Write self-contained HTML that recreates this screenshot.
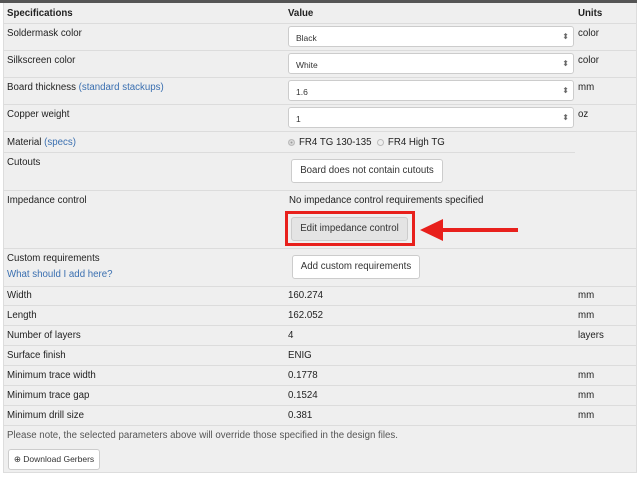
<!DOCTYPE html>
<html><head><meta charset="utf-8"><style>
*{margin:0;padding:0;box-sizing:border-box}
body{width:640px;height:477px;background:#fff;font-family:"Liberation Sans",Arial,sans-serif;font-size:9.7px;color:#222;position:relative;overflow:hidden}
#wrap{position:absolute;left:3px;top:0;width:634px;height:473px;background:#efefef;border-left:1px solid #ddd;border-right:1px solid #ddd;border-bottom:1px solid #ddd}
#top{position:absolute;left:0;top:0;width:637px;height:3px;background:#555}
.t{position:absolute;white-space:nowrap;line-height:11px}
.b{font-weight:bold}
.a{color:#3a6fb0}
.hl{position:absolute;height:1px;background:#dcdcdc;left:3px;width:633px}
.sel{position:absolute;left:288px;width:286px;height:21px;background:#fff;border:1px solid #ccc;border-radius:3px;font-size:8.5px;padding:6px 0 0 7px;color:#333}
.sel:after{content:"⬍";position:absolute;right:4px;top:5px;font-size:8px;color:#666}
.btn{position:absolute;background:#fff;border:1px solid #ccc;border-radius:3px;text-align:center;font-size:9.7px;color:#333}
.rad{display:inline-block;width:7px;height:7px;border-radius:50%;border:1px solid #bbb;background:#eee;vertical-align:-1px;margin-right:4px}
.rad.on{background:#999;box-shadow:inset 0 0 0 1.5px #ddd}
</style></head><body>
<div id="wrap"></div><div id="top"></div>
<div class="t b" style="left:7px;top:8px">Specifications</div>
<div class="t b" style="left:288px;top:8px">Value</div>
<div class="t b" style="left:578px;top:8px">Units</div>
<div class="hl" style="top:23px"></div>
<div class="t" style="left:7px;top:28px">Soldermask color</div>
<div class="sel" style="top:26px">Black</div>
<div class="t" style="left:578px;top:28px">color</div>
<div class="hl" style="top:50px"></div>
<div class="t" style="left:7px;top:55px">Silkscreen color</div>
<div class="sel" style="top:53px">White</div>
<div class="t" style="left:578px;top:55px">color</div>
<div class="hl" style="top:77px"></div>
<div class="t" style="left:7px;top:82px">Board thickness <span class="a">(standard stackups)</span></div>
<div class="sel" style="top:80px">1.6</div>
<div class="t" style="left:578px;top:82px">mm</div>
<div class="hl" style="top:104px"></div>
<div class="t" style="left:7px;top:109px">Copper weight</div>
<div class="sel" style="top:107px">1</div>
<div class="t" style="left:578px;top:109px">oz</div>
<div class="hl" style="top:131px"></div>
<div class="t" style="left:7px;top:137px">Material <span class="a">(specs)</span></div>
<div class="t" style="left:288px;top:137px"><span class="rad on"></span>FR4 TG 130-135 &nbsp;<span class="rad"></span>FR4 High TG</div>
<div class="hl" style="top:152px;width:572px"></div>
<div class="t" style="left:7px;top:157px">Cutouts</div>
<div class="btn" style="left:291px;top:159px;width:152px;height:24px;line-height:22px">Board does not contain cutouts</div>
<div class="hl" style="top:190px"></div>
<div class="t" style="left:7px;top:195px">Impedance control</div>
<div class="t" style="left:289px;top:195px">No impedance control requirements specified</div>
<div style="position:absolute;left:285px;top:211px;width:130px;height:35px;border:3px solid #e8201c"></div>
<div class="btn" style="left:291px;top:217px;width:117px;height:24px;line-height:22px;background:#e4e4e4">Edit impedance control</div>
<svg style="position:absolute;left:415px;top:215px" width="110" height="30"><polygon points="5,15 28,4 28,26" fill="#e8201c"/><rect x="26" y="13" width="77" height="4" fill="#e8201c"/></svg>
<div class="hl" style="top:248px"></div>
<div class="t" style="left:7px;top:253px">Custom requirements</div>
<div class="t a" style="left:7px;top:269px">What should I add here?</div>
<div class="btn" style="left:292px;top:255px;width:128px;height:24px;line-height:22px">Add custom requirements</div>
<div class="hl" style="top:286px"></div>
<div class="t" style="left:7px;top:290px">Width</div><div class="t" style="left:288px;top:290px">160.274</div><div class="t" style="left:578px;top:290px">mm</div>
<div class="hl" style="top:305px"></div>
<div class="t" style="left:7px;top:310px">Length</div><div class="t" style="left:288px;top:310px">162.052</div><div class="t" style="left:578px;top:310px">mm</div>
<div class="hl" style="top:325px"></div>
<div class="t" style="left:7px;top:330px">Number of layers</div><div class="t" style="left:288px;top:330px">4</div><div class="t" style="left:578px;top:330px">layers</div>
<div class="hl" style="top:345px"></div>
<div class="t" style="left:7px;top:350px">Surface finish</div><div class="t" style="left:288px;top:350px">ENIG</div>
<div class="hl" style="top:365px"></div>
<div class="t" style="left:7px;top:370px">Minimum trace width</div><div class="t" style="left:288px;top:370px">0.1778</div><div class="t" style="left:578px;top:370px">mm</div>
<div class="hl" style="top:385px"></div>
<div class="t" style="left:7px;top:390px">Minimum trace gap</div><div class="t" style="left:288px;top:390px">0.1524</div><div class="t" style="left:578px;top:390px">mm</div>
<div class="hl" style="top:405px"></div>
<div class="t" style="left:7px;top:410px">Minimum drill size</div><div class="t" style="left:288px;top:410px">0.381</div><div class="t" style="left:578px;top:410px">mm</div>
<div class="hl" style="top:425px"></div>
<div class="t" style="left:7px;top:430px;color:#555">Please note, the selected parameters above will override those specified in the design files.</div>
<div class="btn" style="left:8px;top:449px;width:92px;height:21px;line-height:19px;font-size:8.5px">⊕ Download Gerbers</div>
</body></html>
